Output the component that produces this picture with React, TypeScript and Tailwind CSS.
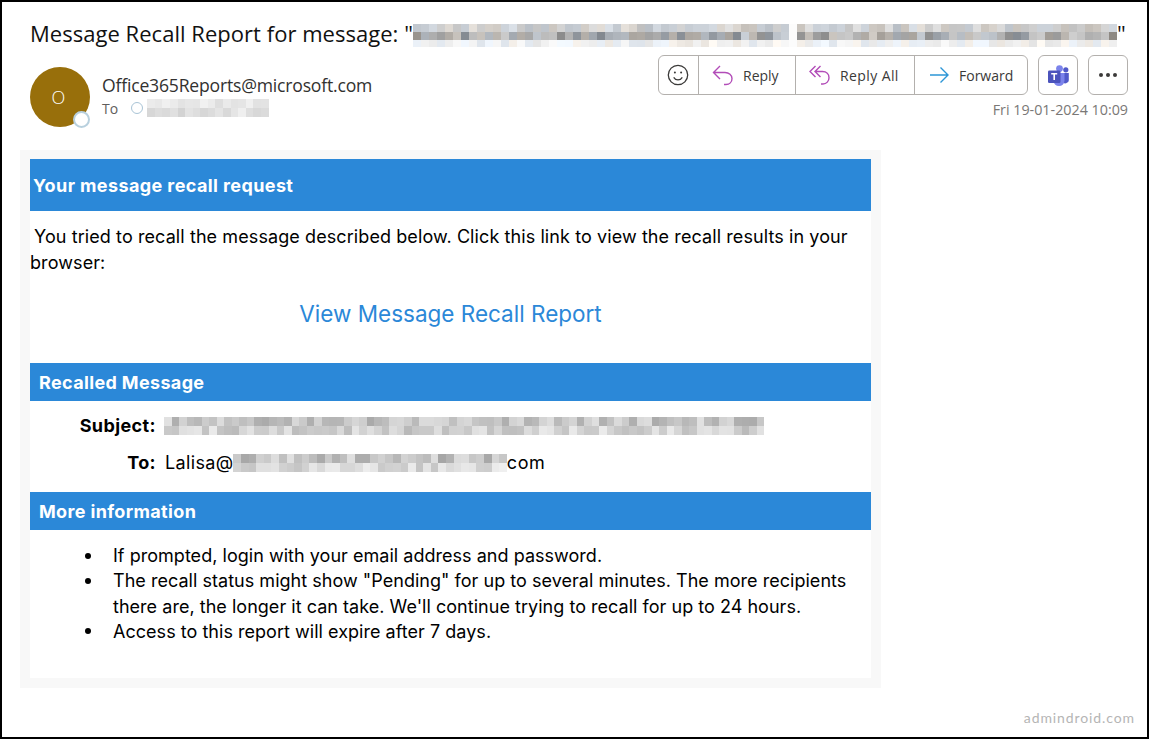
const uiFont = "font-['Open_Sans','Noto_Sans',sans-serif]";

// mosaic stand-in for the blurred-out text, same colours every render
function Mosaic({
  width,
  cell,
  rows,
  gaps = [],
  neutral = false,
  className = "",
}: {
  width: number;
  cell: number;
  rows: [number, number, number][];
  gaps?: number[];
  neutral?: boolean;
  className?: string;
}) {
  const count = Math.floor(width / cell);
  let seed = width * 7 + cell * 13 + 11;
  const next = () => {
    seed = (seed * 9301 + 49297) % 233280;
    return seed / 233280;
  };
  return (
    <div className={`flex flex-col shrink-0 ${className}`}>
      {rows.map(([h, lo, hi], r) => (
        <div key={r} className="flex">
          {Array.from({ length: count }).map((_, i) => {
            const v = Math.round(lo + (hi - lo) * next());
            const tint = next();
            const c = gaps.includes(i)
              ? "rgb(252,252,252)"
              : neutral
                ? `rgb(${v},${v},${v})`
                : tint > 0.7
                  ? `rgb(${v + 6},${v + 1},${v - 5})`
                  : tint < 0.3
                    ? `rgb(${v - 6},${v},${v + 7})`
                    : `rgb(${v},${v},${v})`;
            return <div key={i} style={{ width: cell, height: h, backgroundColor: c }} />;
          })}
        </div>
      ))}
    </div>
  );
}

function ReplyIcon() {
  return (
    <svg width="22" height="24" viewBox="0 0 22 24" fill="none" stroke="#b24cb8" strokeWidth="1.4" className="shrink-0">
      <path d="M8 3 1.500 9.500 8 16M1.500 9.500H13c4 0 7 2.500 7 6s-2.500 6-6 6h-2" />
    </svg>
  );
}

function ReplyAllIcon() {
  return (
    <svg width="22" height="24" viewBox="0 0 22 24" fill="none" stroke="#b24cb8" strokeWidth="1.4" className="shrink-0">
      <path d="M6.500 3 1 8.500 6.500 14M11.500 3 6 8.500 11.500 14M6 8.500h7.500c4 0 6.500 2.800 6.500 6.200s-2.500 6.300-6 6.300h-2" />
    </svg>
  );
}

function ForwardIcon() {
  return (
    <svg width="20" height="20" viewBox="0 0 20 20" fill="none" stroke="#2d96d6" strokeWidth="1.4" className="shrink-0">
      <path d="M1 10h17.500M11.500 2.500 19 10l-7.500 7.500" />
    </svg>
  );
}

function TeamsIcon() {
  return (
    <svg width="21" height="21" viewBox="0 0 21 21">
      <circle cx="11.500" cy="3.600" r="3.400" fill="#7b83eb" />
      <circle cx="17.800" cy="4.800" r="2.600" fill="#5059c9" />
      <path d="M14 8h6.800v6.500a3.500 3.500 0 0 1-6.800 1.500z" fill="#5059c9" />
      <path d="M5.500 8h11v7.500a5.500 5.500 0 0 1-11 0z" fill="#7b83eb" />
      <rect x="0" y="5.500" width="12.500" height="12.500" rx="1.200" fill="#4b53bc" />
      <path d="M3.200 8.800h6M6.200 8.800v6.200" stroke="#fff" strokeWidth="1.600" fill="none" />
    </svg>
  );
}

function Smiley() {
  return (
    <svg width="22" height="22" viewBox="0 0 22 22" fill="none" stroke="#3b3a39" strokeWidth="1.300">
      <circle cx="11" cy="11" r="9.700" />
      <path d="M6.700 13.300c1 1.700 2.500 2.500 4.300 2.500s3.300-.8 4.300-2.500" />
      <circle cx="7.900" cy="8.500" r="1" fill="#3b3a39" stroke="none" />
      <circle cx="14.100" cy="8.500" r="1" fill="#3b3a39" stroke="none" />
    </svg>
  );
}

function SectionBar({ children }: { children: React.ReactNode }) {
  return (
    <div className="h-[38px] bg-[#2b88d8] pl-[9px] flex items-center text-white font-bold text-[18px] tracking-[0.35px]">
      {children}
    </div>
  );
}

function Bullet({ children }: { children: React.ReactNode }) {
  return (
    <li className="flex">
      <span className="w-[28px] h-[25px] shrink-0 flex items-center">
        <span className="w-[6px] h-[6px] rounded-full bg-black" />
      </span>
      <span>{children}</span>
    </li>
  );
}

export default function App() {
  return (
    <div className="w-[1149px] h-[739px] bg-white border-2 border-black overflow-hidden relative font-['Inter',sans-serif] text-black">
      <div className={`pl-[28px] pr-[19px] pt-[16px] ${uiFont}`}>
        <div className="flex items-center h-[30px] text-[#111] text-[22px] tracking-[0.03px] whitespace-nowrap">
          <span>Message Recall Report for message: "</span>
          <Mosaic
            width={704}
            cell={8}
            rows={[
              [8, 190, 225],
              [8, 135, 210],
              [7, 228, 250],
            ]}
            gaps={[47]}
            className="mt-[5px]"
          />
          <span>"</span>
        </div>

        <div className="flex mt-[6px]">
          <div className="relative w-[60px] h-[60px] mt-[13px] rounded-full bg-[#986f0b] flex items-center justify-center text-white text-[18px] font-light shrink-0">
            <span className="mr-[3px]">O</span>
            <div className="absolute right-0 bottom-[-1px] w-[17px] h-[17px] rounded-full bg-white border-2 border-[#b8d0de]" />
          </div>

          <div className="ml-[12px] mt-[19px] flex-1 min-w-0">
            <div className="text-[17.600px] leading-[24px] text-[#323130] tracking-[-0.2px]">Office365Reports@microsoft.com</div>
            <div className="flex items-center h-[20px] mt-[1px] text-[14px] text-[#605e5c]">
              <span>To</span>
              <span className="ml-[13px] w-[12px] h-[12px] rounded-full border border-[#a9c4d6] shrink-0" />
              <Mosaic
                width={122}
                cell={7.600}
                neutral
                rows={[
                  [9, 222, 242],
                  [9, 208, 240],
                ]}
                className="ml-[4px]"
              />
            </div>
          </div>

          <div className="flex flex-col items-end shrink-0 mt-[1px]">
            <div className="flex gap-[10px] text-[14px] text-[#3b3a39]">
              <div className="flex h-[40px] border border-[#b3b0ad] rounded-[6px] divide-x divide-[#b3b0ad]">
                <div className="w-[40px] flex items-center justify-center pr-[1px]">
                  <Smiley />
                </div>
                <div className="w-[97px] flex items-center pl-[13px] gap-[9px]">
                  <ReplyIcon />
                  Reply
                </div>
                <div className="w-[119px] flex items-center pl-[13px] gap-[9px] tracking-[0.4px]">
                  <ReplyAllIcon />
                  Reply All
                </div>
                <div className="w-[112px] flex items-center pl-[14px] gap-[10px]">
                  <ForwardIcon />
                  Forward
                </div>
              </div>
              <div className="w-[40px] h-[40px] border border-[#b3b0ad] rounded-[6px] flex items-center justify-center">
                <TeamsIcon />
              </div>
              <div className="w-[40px] h-[40px] border border-[#b3b0ad] rounded-[6px] flex items-center justify-center gap-[3px]">
                <span className="w-[4px] h-[4px] rounded-full bg-[#3b3a39]" />
                <span className="w-[4px] h-[4px] rounded-full bg-[#3b3a39]" />
                <span className="w-[4px] h-[4px] rounded-full bg-[#3b3a39]" />
              </div>
            </div>
            <div className="mt-[5px] text-[14.300px] leading-[20px] text-[#7a7876]">Fri 19-01-2024 10:09</div>
          </div>
        </div>
      </div>

      <div className="ml-[18px] mt-[23px] w-[861px] h-[538px] bg-[#f8f8f8] p-[10px] pt-[9px]">
        <div className="bg-white h-[519px] text-[18px] leading-[25px]">
          <div className="h-[52px] bg-[#2b88d8] pl-[3px] flex items-center text-white font-bold text-[18px] tracking-[0.4px]">
            Your message recall request
          </div>
          <p className="mt-[13px] pr-[10px] leading-[26px] tracking-[0.09px]">
            <span className="inline-block w-[4px]" />You tried to recall the message described below. Click this link to
            view the recall results in your browser:
          </p>
          <div className="mt-[23px] text-center text-[22.500px] leading-[30px] text-[#2b88d8]">View Message Recall Report</div>
          <div className="mt-[34px]">
            <SectionBar>Recalled Message</SectionBar>
          </div>

          <div className="mt-[12px] flex items-center h-[25px]">
            <span className="w-[126px] text-right font-bold tracking-[0.4px]">Subject:</span>
            <Mosaic
              width={600}
              cell={7.500}
              neutral
              rows={[
                [9, 170, 225],
                [9, 185, 235],
              ]}
              className="ml-[8px]"
            />
          </div>
          <div className="mt-[12px] flex items-center h-[25px]">
            <span className="w-[126px] text-right font-bold tracking-[0.4px]">To:</span>
            <span className="ml-[9px] tracking-[0.35px]">Lalisa@</span>
            <Mosaic
              width={276}
              cell={7.600}
              neutral
              rows={[
                [9, 165, 225],
                [9, 195, 240],
              ]}
            />
            <span className="tracking-[0.6px]">com</span>
          </div>

          <div className="mt-[17px]">
            <SectionBar>More information</SectionBar>
          </div>

          <ul className="mt-[13px] ml-[55px] mr-[20px] leading-[25.330px] tracking-[0.03px]">
            <Bullet>If prompted, login with your email address and password.</Bullet>
            <Bullet>
              The recall status might show "Pending" for up to several minutes. The more recipients there are, the
              longer it can take. We'll continue trying to recall for up to 24 hours.
            </Bullet>
            <Bullet>Access to this report will expire after 7 days.</Bullet>
          </ul>
        </div>
      </div>

      <div className="absolute right-[12px] bottom-[11px] text-[14px] leading-[16px] tracking-[0.900px] text-[#b5b5b5] font-['Lato',sans-serif]">
        admindroid.com
      </div>
    </div>
  );
}
